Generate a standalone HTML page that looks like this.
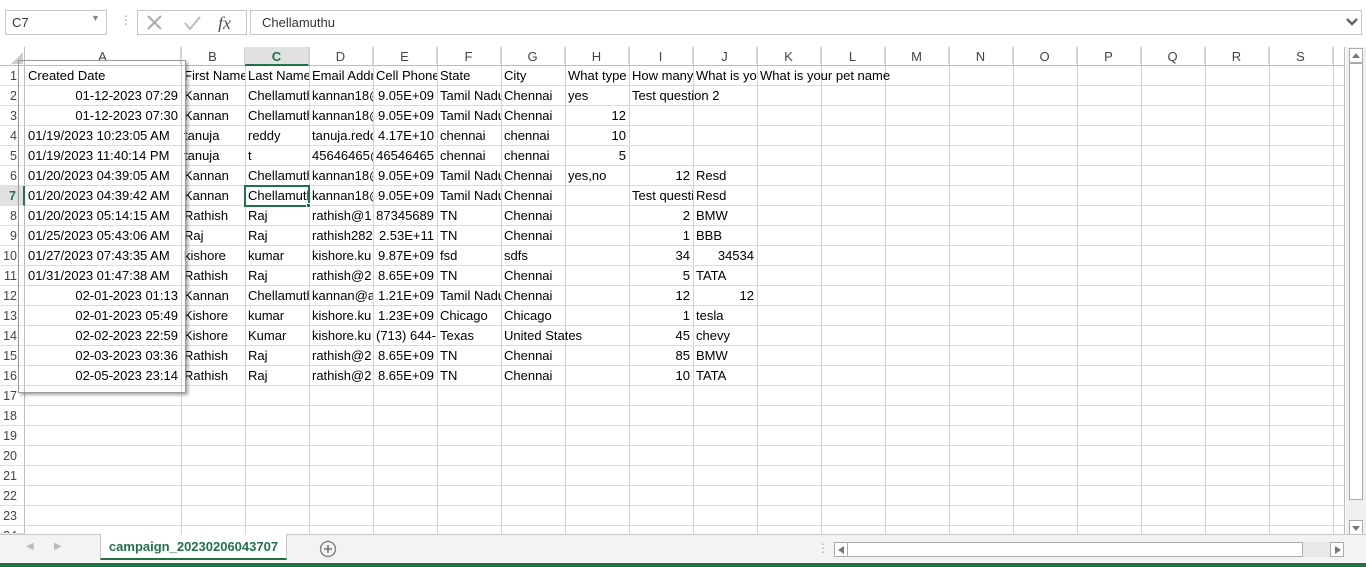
<!DOCTYPE html>
<html><head><meta charset="utf-8"><style>
*{margin:0;padding:0;box-sizing:border-box}
body{width:1366px;height:567px;position:relative;overflow:hidden;background:#fff;font-family:"Liberation Sans",sans-serif;font-size:13px;color:#000}
.abs{position:absolute}
.c{position:absolute;height:20px;line-height:20px;padding:0 3px;white-space:nowrap;overflow:hidden}
.r{text-align:right}
.a{left:25px;width:156px}.b{left:181px;width:64px}.cc{left:245px;width:64px}.d{left:309px;width:64px}.e{left:373px;width:64px}.f{left:437px;width:64px}.g{left:501px;width:64px}.h{left:565px;width:64px}.i{left:629px;width:64px}.j{left:693px;width:64px}.k{left:757px;width:200px}
.w2{width:128px}
.r1{top:66px}.r2{top:86px}.r3{top:106px}.r4{top:126px}.r5{top:146px}.r6{top:166px}.r7{top:186px}.r8{top:206px}.r9{top:226px}.r10{top:246px}.r11{top:266px}.r12{top:286px}.r13{top:306px}.r14{top:326px}.r15{top:346px}.r16{top:366px}
.ch{position:absolute;top:47px;height:19px;line-height:19px;text-align:center;color:#444;font-size:13px;border-right:1px solid #d4d4d4;border-bottom:1px solid #bdbdbd}
.rh{position:absolute;left:0;width:25px;height:20px;line-height:20px;text-align:right;padding-right:7px;color:#444;font-size:12.5px;border-bottom:1px solid #e0e0e0;border-right:1px solid #bdbdbd;background:#fff;white-space:nowrap}
</style></head><body>
<!-- formula bar -->
<div class="abs" style="left:5px;top:10px;width:102px;height:25px;border:1px solid #c6c6c6"></div>
<div class="abs" style="left:12px;top:15px;font-size:13px;color:#333">C7</div>
<div class="abs" style="left:91px;top:13px;font-size:9px;color:#888">▼</div>
<div class="abs" style="left:120px;top:13px;color:#aaa;font-size:12px">⋮</div>
<div class="abs" style="left:137px;top:10px;width:110px;height:25px;border:1px solid #c6c6c6"></div>
<svg class="abs" style="left:145px;top:14px" width="100" height="18"><path d="M3 2 L16 15 M16 2 L3 15" stroke="#aaa" stroke-width="2" fill="none"/><path d="M40 9 L45 15 L55 3" stroke="#bbb" stroke-width="2" fill="none"/><text x="73" y="15" font-family="Liberation Serif" font-style="italic" font-size="18" fill="#555">fx</text></svg>
<div class="abs" style="left:250px;top:10px;width:1112px;height:25px;border:1px solid #c6c6c6"></div>
<div class="abs" style="left:262px;top:15px;color:#333">Chellamuthu</div>
<svg class="abs" style="left:1345px;top:17px" width="14" height="10"><path d="M2 2 L7 7 L12 2" stroke="#666" stroke-width="2.5" fill="none"/></svg>

<!-- grid -->
<div class="abs" style="left:25px;top:66px;width:1320px;height:468px;background:repeating-linear-gradient(to bottom,transparent 0 19px,#dadada 19px 20px)"></div>
<div class="abs" style="left:181px;top:47px;width:1164px;height:487px;background:repeating-linear-gradient(to right,#d4d4d4 0 1px,transparent 1px 64px)"></div>
<div class="abs" style="left:1344px;top:47px;width:1px;height:487px;background:#bdbdbd"></div>
<div class="abs" style="left:0;top:47px;width:1345px;height:19px;border-bottom:1px solid #bdbdbd"></div>
<div class="ch" style="left:25px;width:156px">A</div>
<div class="ch" style="left:181px;width:64px">B</div>
<div class="ch" style="left:245px;width:64px;background:#e1e1e1;color:#217346;font-weight:bold;border-bottom:2px solid #217346">C</div>
<div class="ch" style="left:309px;width:64px">D</div><div class="ch" style="left:373px;width:64px">E</div><div class="ch" style="left:437px;width:64px">F</div><div class="ch" style="left:501px;width:64px">G</div><div class="ch" style="left:565px;width:64px">H</div><div class="ch" style="left:629px;width:64px">I</div><div class="ch" style="left:693px;width:64px">J</div><div class="ch" style="left:757px;width:64px">K</div><div class="ch" style="left:821px;width:64px">L</div><div class="ch" style="left:885px;width:64px">M</div><div class="ch" style="left:949px;width:64px">N</div><div class="ch" style="left:1013px;width:64px">O</div><div class="ch" style="left:1077px;width:64px">P</div><div class="ch" style="left:1141px;width:64px">Q</div><div class="ch" style="left:1205px;width:64px">R</div><div class="ch" style="left:1269px;width:64px">S</div>
<div class="abs" style="left:0;top:47px;width:25px;height:19px;border-right:1px solid #bdbdbd;border-bottom:1px solid #bdbdbd"></div>
<svg class="abs" style="left:10px;top:51px" width="14" height="14"><path d="M13 1 L13 13 L1 13 Z" fill="#ccc"/></svg>

<div class="rh" style="top:66px">1</div><div class="rh" style="top:86px">2</div><div class="rh" style="top:106px">3</div><div class="rh" style="top:126px">4</div><div class="rh" style="top:146px">5</div><div class="rh" style="top:166px">6</div>
<div class="rh" style="top:186px;background:#e1e1e1;color:#217346;font-weight:bold;border-right:2px solid #217346">7</div>
<div class="rh" style="top:206px">8</div><div class="rh" style="top:226px">9</div><div class="rh" style="top:246px">10</div><div class="rh" style="top:266px">11</div><div class="rh" style="top:286px">12</div><div class="rh" style="top:306px">13</div><div class="rh" style="top:326px">14</div><div class="rh" style="top:346px">15</div><div class="rh" style="top:366px">16</div><div class="rh" style="top:386px">17</div><div class="rh" style="top:406px">18</div><div class="rh" style="top:426px">19</div><div class="rh" style="top:446px">20</div><div class="rh" style="top:466px">21</div><div class="rh" style="top:486px">22</div><div class="rh" style="top:506px">23</div><div class="rh" style="top:526px;height:8px;overflow:hidden">24</div>

<!-- cells -->
<div class="c a r1">Created Date</div><div class="c b r1">First Name</div><div class="c cc r1">Last Name</div><div class="c d r1">Email Address</div><div class="c e r1">Cell Phone</div><div class="c f r1">State</div><div class="c g r1">City</div><div class="c h r1">What type</div><div class="c i r1">How many</div><div class="c j r1">What is your</div><div class="c k r1">What is your pet name</div>

<div class="c a r2 r">01-12-2023 07:29</div><div class="c b r2">Kannan</div><div class="c cc r2">Chellamuthu</div><div class="c d r2">kannan18@</div><div class="c e r2 r">9.05E+09</div><div class="c f r2">Tamil Nadu</div><div class="c g r2">Chennai</div><div class="c h r2">yes</div><div class="c i r2 w2">Test question 2</div>
<div class="c a r3 r">01-12-2023 07:30</div><div class="c b r3">Kannan</div><div class="c cc r3">Chellamuthu</div><div class="c d r3">kannan18@</div><div class="c e r3 r">9.05E+09</div><div class="c f r3">Tamil Nadu</div><div class="c g r3">Chennai</div><div class="c h r3 r">12</div>
<div class="c a r4">01/19/2023 10:23:05 AM</div><div class="c b r4">tanuja</div><div class="c cc r4">reddy</div><div class="c d r4">tanuja.reddy</div><div class="c e r4 r">4.17E+10</div><div class="c f r4">chennai</div><div class="c g r4">chennai</div><div class="c h r4 r">10</div>
<div class="c a r5">01/19/2023 11:40:14 PM</div><div class="c b r5">tanuja</div><div class="c cc r5">t</div><div class="c d r5">45646465@</div><div class="c e r5 r">46546465</div><div class="c f r5">chennai</div><div class="c g r5">chennai</div><div class="c h r5 r">5</div>
<div class="c a r6">01/20/2023 04:39:05 AM</div><div class="c b r6">Kannan</div><div class="c cc r6">Chellamuthu</div><div class="c d r6">kannan18@</div><div class="c e r6 r">9.05E+09</div><div class="c f r6">Tamil Nadu</div><div class="c g r6">Chennai</div><div class="c h r6">yes,no</div><div class="c i r6 r">12</div><div class="c j r6">Resd</div>
<div class="c a r7">01/20/2023 04:39:42 AM</div><div class="c b r7">Kannan</div><div class="c cc r7">Chellamuthu</div><div class="c d r7">kannan18@</div><div class="c e r7 r">9.05E+09</div><div class="c f r7">Tamil Nadu</div><div class="c g r7">Chennai</div><div class="c i r7">Test question</div><div class="c j r7">Resd</div>
<div class="c a r8">01/20/2023 05:14:15 AM</div><div class="c b r8">Rathish</div><div class="c cc r8">Raj</div><div class="c d r8">rathish@1</div><div class="c e r8 r">87345689</div><div class="c f r8">TN</div><div class="c g r8">Chennai</div><div class="c i r8 r">2</div><div class="c j r8">BMW</div>
<div class="c a r9">01/25/2023 05:43:06 AM</div><div class="c b r9">Raj</div><div class="c cc r9">Raj</div><div class="c d r9">rathish282</div><div class="c e r9 r">2.53E+11</div><div class="c f r9">TN</div><div class="c g r9">Chennai</div><div class="c i r9 r">1</div><div class="c j r9">BBB</div>
<div class="c a r10">01/27/2023 07:43:35 AM</div><div class="c b r10">kishore</div><div class="c cc r10">kumar</div><div class="c d r10">kishore.ku</div><div class="c e r10 r">9.87E+09</div><div class="c f r10">fsd</div><div class="c g r10">sdfs</div><div class="c i r10 r">34</div><div class="c j r10 r">34534</div>
<div class="c a r11">01/31/2023 01:47:38 AM</div><div class="c b r11">Rathish</div><div class="c cc r11">Raj</div><div class="c d r11">rathish@2</div><div class="c e r11 r">8.65E+09</div><div class="c f r11">TN</div><div class="c g r11">Chennai</div><div class="c i r11 r">5</div><div class="c j r11">TATA</div>
<div class="c a r12 r">02-01-2023 01:13</div><div class="c b r12">Kannan</div><div class="c cc r12">Chellamuthu</div><div class="c d r12">kannan@a</div><div class="c e r12 r">1.21E+09</div><div class="c f r12">Tamil Nadu</div><div class="c g r12">Chennai</div><div class="c i r12 r">12</div><div class="c j r12 r">12</div>
<div class="c a r13 r">02-01-2023 05:49</div><div class="c b r13">Kishore</div><div class="c cc r13">kumar</div><div class="c d r13">kishore.ku</div><div class="c e r13 r">1.23E+09</div><div class="c f r13">Chicago</div><div class="c g r13">Chicago</div><div class="c i r13 r">1</div><div class="c j r13">tesla</div>
<div class="c a r14 r">02-02-2023 22:59</div><div class="c b r14">Kishore</div><div class="c cc r14">Kumar</div><div class="c d r14">kishore.ku</div><div class="c e r14">(713) 644-</div><div class="c f r14">Texas</div><div class="c g r14 w2">United States</div><div class="c i r14 r">45</div><div class="c j r14">chevy</div>
<div class="c a r15 r">02-03-2023 03:36</div><div class="c b r15">Rathish</div><div class="c cc r15">Raj</div><div class="c d r15">rathish@2</div><div class="c e r15 r">8.65E+09</div><div class="c f r15">TN</div><div class="c g r15">Chennai</div><div class="c i r15 r">85</div><div class="c j r15">BMW</div>
<div class="c a r16 r">02-05-2023 23:14</div><div class="c b r16">Rathish</div><div class="c cc r16">Raj</div><div class="c d r16">rathish@2</div><div class="c e r16 r">8.65E+09</div><div class="c f r16">TN</div><div class="c g r16">Chennai</div><div class="c i r16 r">10</div><div class="c j r16">TATA</div>

<!-- selected cell -->
<div class="abs" style="left:244px;top:185px;width:66px;height:22px;border:2px solid #217346"></div>
<div class="abs" style="left:306px;top:203px;width:5px;height:5px;background:#217346;border:1px solid #fff"></div>
<!-- overlay box -->
<div class="abs" style="left:18px;top:60px;width:168px;height:333px;border:1px solid #9a9a9a;box-shadow:2px 2px 3px rgba(0,0,0,.35)"></div>

<!-- vertical scrollbar -->
<div class="abs" style="left:1346px;top:47px;width:20px;height:488px;background:#f0f0f0"></div>
<div class="abs" style="left:1349px;top:48px;width:14px;height:15px;background:#fff;border:1px solid #ababab"></div>
<svg class="abs" style="left:1352px;top:53px" width="8" height="5"><path d="M0 5 L4 0 L8 5Z" fill="#777"/></svg>
<div class="abs" style="left:1349px;top:63px;width:14px;height:437px;background:#fff;border:1px solid #ababab"></div>
<div class="abs" style="left:1349px;top:520px;width:14px;height:15px;background:#fff;border:1px solid #ababab"></div>
<svg class="abs" style="left:1352px;top:526px" width="8" height="5"><path d="M0 0 L4 5 L8 0Z" fill="#777"/></svg>

<!-- tab bar -->
<div class="abs" style="left:0;top:534px;width:1366px;height:29px;background:#f3f3f3;border-top:1px solid #c6c6c6"></div>
<div class="abs" style="left:26px;top:541px;font-size:10px;color:#bbb">◀</div>
<div class="abs" style="left:54px;top:541px;font-size:10px;color:#bbb">▶</div>
<div class="abs" style="left:100px;top:534px;width:187px;height:26px;background:#fff;border-left:1px solid #c6c6c6;border-right:1px solid #c6c6c6;border-bottom:2px solid #217346;text-align:center;line-height:26px;color:#217346;font-weight:bold;font-size:13px">campaign_20230206043707</div>
<svg class="abs" style="left:319px;top:540px" width="18" height="18"><circle cx="9" cy="9" r="7.5" fill="none" stroke="#777" stroke-width="1.3"/><path d="M9 5 V13 M5 9 H13" stroke="#777" stroke-width="1.6"/></svg>
<div class="abs" style="left:817px;top:541px;color:#aaa;font-size:12px">⋮</div>
<div class="abs" style="left:834px;top:542px;width:469px;height:15px;background:#fff;border:1px solid #ababab"></div>
<div class="abs" style="left:1303px;top:542px;width:27px;height:15px;background:#e8e8e8"></div>
<div class="abs" style="left:834px;top:542px;width:14px;height:15px;border:1px solid #ababab;background:#fff"></div>
<svg class="abs" style="left:838px;top:546px" width="6" height="8"><path d="M6 0 L0 4 L6 8Z" fill="#777"/></svg>
<div class="abs" style="left:1330px;top:542px;width:14px;height:15px;border:1px solid #ababab;background:#fff"></div>
<svg class="abs" style="left:1335px;top:546px" width="6" height="8"><path d="M0 0 L6 4 L0 8Z" fill="#777"/></svg>
<div class="abs" style="left:0;top:563px;width:1366px;height:4px;background:#217346"></div>
</body></html>
